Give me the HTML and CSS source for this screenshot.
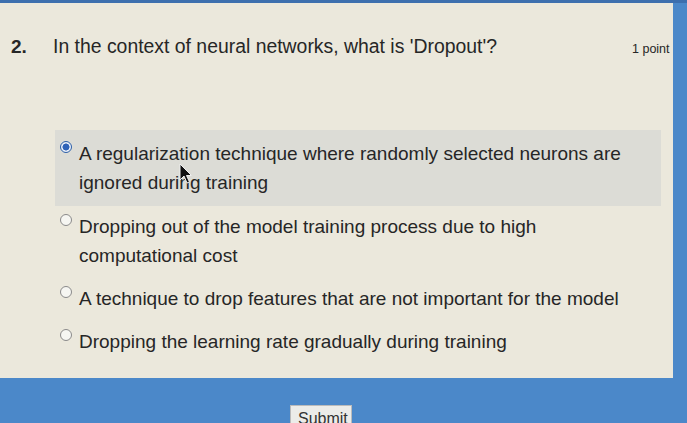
FILE: index.html
```html
<!DOCTYPE html>
<html>
<head>
<meta charset="utf-8">
<link rel="stylesheet" href="styles.css">
</head>
<body>
<div class="topbar"></div>
<div class="card">
  <div class="q-header">
    <span class="q-num">2.</span>
    <span class="q-text">In the context of neural networks, what is 'Dropout'?</span>
    <span class="q-points">1 point</span>
  </div>
  <div class="options">
    <label class="option selected">
      <span class="radio checked"></span>
      <span class="opt-text">A regularization technique where randomly selected neurons are ignored during training</span>
    </label>
    <label class="option">
      <span class="radio"></span>
      <span class="opt-text">Dropping out of the model training process due to high computational cost</span>
    </label>
    <label class="option">
      <span class="radio"></span>
      <span class="opt-text">A technique to drop features that are not important for the model</span>
    </label>
    <label class="option">
      <span class="radio"></span>
      <span class="opt-text">Dropping the learning rate gradually during training</span>
    </label>
  </div>
  <svg class="cursor" width="14" height="22" viewBox="0 0 14 22"><path d="M1 1 L1 17 L5 13 L8 20 L10.5 19 L7.5 12.5 L12.5 12.5 Z" fill="#111" stroke="#eee" stroke-width="1"/></svg>
</div>
<div class="footer">
  <button class="submit">Submit</button>
</div>
</body>
</html>
```
FILE: styles.css
```css
html, body {
  margin: 0;
  padding: 0;
}
body {
  background: #4b88c9;
  font-family: "Liberation Sans", Arial, sans-serif;
  color: #262626;
  width: 687px;
  height: 423px;
  overflow: hidden;
}
.topbar {
  height: 3px;
  background: #3d6fae;
}
.card {
  position: relative;
  background: #ebe8dc;
  margin-right: 14px;
  height: 375px;
  box-sizing: border-box;
  padding-top: 32px;
}
.q-header {
  display: flex;
  align-items: baseline;
  padding-left: 11px;
}
.q-num {
  font-weight: bold;
  font-size: 19px;
  width: 42px;
}
.q-text {
  font-size: 19.4px;
  flex: 1;
}
.q-points {
  font-size: 12.5px;
  width: 41px;
}
.options {
  margin-top: 72px;
  margin-left: 55px;
  margin-right: 12px;
  display: flex;
  flex-direction: column;
}
.option {
  display: flex;
  align-items: flex-start;
  font-size: 19px;
  line-height: 29px;
  padding: 6px 14px 8px 5px;
}
.option.selected {
  background: #dcdcd6;
  padding-top: 9px;
  padding-bottom: 9px;
}
.radio {
  flex: none;
  width: 12px;
  height: 12px;
  border: 1px solid #8a8a8a;
  border-radius: 50%;
  background: #f6f6f2;
  margin-top: 2px;
  margin-right: 7px;
  box-sizing: border-box;
}
.radio.checked {
  border: 1px solid #2c5fa8;
  background: radial-gradient(circle, #2f63b8 0 3.2px, #e8eef8 3.8px);
}
.opt-text {
  display: block;
}
.cursor {
  position: absolute;
  left: 179px;
  top: 160px;
}
.footer {
  display: flex;
  padding-left: 290px;
  padding-top: 27px;
}
.submit {
  font-family: "Liberation Sans", Arial, sans-serif;
  font-size: 16px;
  color: #333;
  background: #ecece9;
  border: 1px solid #bbb;
  padding: 4px 7px;
  width: 62px;
}
```
